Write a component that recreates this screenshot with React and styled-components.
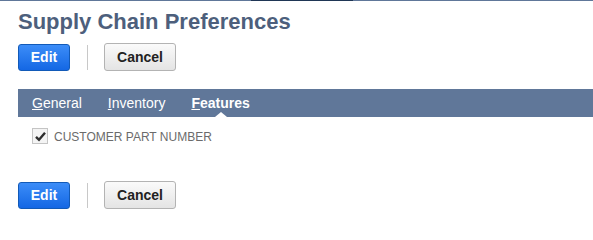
import React from 'react'
import styled, { createGlobalStyle } from 'styled-components'

const GlobalStyle = createGlobalStyle`
  html, body {
    margin: 0;
    padding: 0;
    background: #fff;
    font-family: "Liberation Sans", Arial, sans-serif;
  }
`

function ButtonRow() {
  return (
    <Buttons>
      <EditButton>Edit</EditButton>
      <Divider />
      <CancelButton>Cancel</CancelButton>
    </Buttons>
  )
}

function App() {
  return (
    <Page>
      <GlobalStyle />
      <TopLine>
        <TopLineMark />
      </TopLine>
      <Title>Supply Chain Preferences</Title>
      <ButtonRow />
      <TabBar>
        <Tab><u>G</u>eneral</Tab>
        <Tab><u>I</u>nventory</Tab>
        <Tab active><u>F</u>eatures</Tab>
      </TabBar>
      <Field>
        <CheckBox>
          <svg width='13' height='13' viewBox='0 0 13 13'>
            <path d='M2 6.8 L5 9.8 L11 2.8' fill='none' stroke='#2e2e2e' strokeWidth='2.4' />
          </svg>
        </CheckBox>
        <Label>CUSTOMER PART NUMBER</Label>
      </Field>
      <BottomButtons>
        <ButtonRow />
      </BottomButtons>
    </Page>
  )
}

export default App

const Page = styled.div`
  width: 593px;
  height: 240px;
  overflow: hidden;
  display: flex;
  flex-direction: column;
`

const TopLine = styled.div`
  height: 1px;
  background: #607799;
  position: relative;
`

const TopLineMark = styled.div`
  position: absolute;
  left: 251px;
  width: 102px;
  top: 0;
  height: 1px;
  background: #1f3655;
`

const Title = styled.h1`
  margin: 8px 0 0 18px;
  font-size: 22px;
  line-height: 26px;
  font-weight: bold;
  color: #4d5f7c;
`

const Buttons = styled.div`
  display: flex;
  align-items: center;
  margin: 8px 0 0 18px;
  height: 28px;
`

const EditButton = styled.button`
  width: 52px;
  height: 27px;
  border: 1px solid #125ab8;
  border-radius: 3px;
  background: linear-gradient(#3c8df8, #1467e4);
  color: #fff;
  font-family: "Liberation Sans", Arial, sans-serif;
  font-weight: bold;
  font-size: 14px;
  padding: 0;
`

const Divider = styled.div`
  width: 1px;
  height: 25px;
  background: #c8c8c8;
  margin: 0 16px 0 17px;
`

const CancelButton = styled.button`
  width: 72px;
  height: 28px;
  border: 1px solid #b3b3b3;
  border-radius: 3px;
  background: linear-gradient(#fafafa, #e4e4e4);
  color: #222;
  font-family: "Liberation Sans", Arial, sans-serif;
  font-weight: bold;
  font-size: 14px;
  padding: 0;
`

const TabBar = styled.div`
  display: flex;
  align-items: center;
  margin: 18px 0 0 18px;
  height: 28px;
  background: #607799;
  padding-left: 14px;
  gap: 26px;
`

const Tab = styled.div`
  position: relative;
  color: #fff;
  font-size: 14px;
  font-weight: ${p => (p.active ? 'bold' : 'normal')};
  height: 28px;
  line-height: 28px;

  &:after {
    content: '';
    display: ${p => (p.active ? 'block' : 'none')};
    position: absolute;
    left: 50%;
    bottom: 0;
    margin-left: -6px;
    border-left: 6px solid transparent;
    border-right: 6px solid transparent;
    border-bottom: 5px solid #fff;
  }
`

const Field = styled.div`
  display: flex;
  align-items: center;
  margin: 11px 0 0 32px;
`

const CheckBox = styled.div`
  width: 14px;
  height: 14px;
  border: 1px solid #c4c4c4;
  background: #f4f4f4;
  display: flex;
  align-items: center;
  justify-content: center;
`

const Label = styled.span`
  margin-left: 6px;
  font-size: 12px;
  color: #6b6b6b;
  margin-top: 2px;
`

const BottomButtons = styled.div`
  margin-top: 29px;
`
